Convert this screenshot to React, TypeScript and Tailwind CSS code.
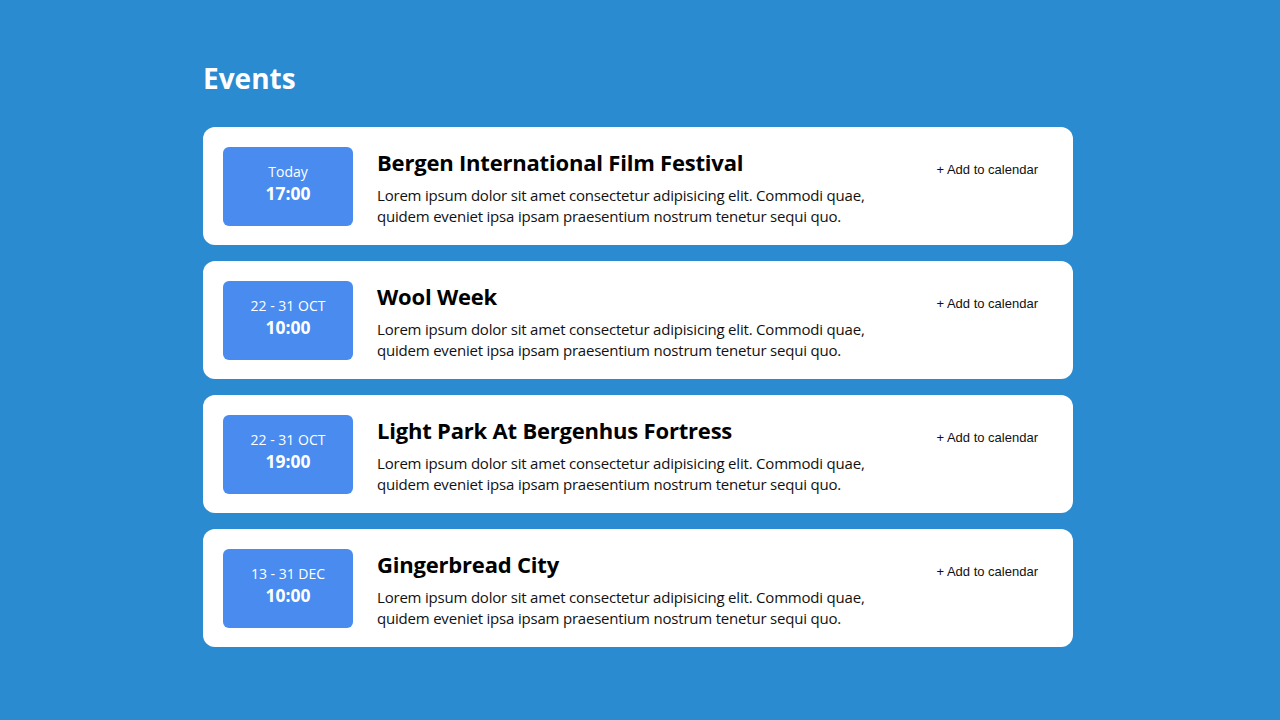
const events = [
  { date: "Today", time: "17:00", title: "Bergen International Film Festival" },
  { date: "22 - 31 OCT", time: "10:00", title: "Wool Week" },
  { date: "22 - 31 OCT", time: "19:00", title: "Light Park At Bergenhus Fortress" },
  { date: "13 - 31 DEC", time: "10:00", title: "Gingerbread City" },
];

const desc =
  "Lorem ipsum dolor sit amet consectetur adipisicing elit. Commodi quae, quidem eveniet ipsa ipsam praesentium nostrum tenetur sequi quo.";

export default function App() {
  return (
    <div className="min-h-[720px] w-full bg-[#2a8bd0] font-['Open_Sans',sans-serif]">
      <div className="ml-[203px] w-[870px] pt-[58px]">
        <h1 className="text-[28px] font-bold leading-[40px] text-white">Events</h1>
        <div className="mt-[29px] flex flex-col gap-4">
          {events.map((e) => (
            <div key={e.title} className="flex h-[118px] items-start rounded-xl bg-white p-5">
              <div className="flex h-[79px] w-[130px] flex-none flex-col items-center justify-center rounded-md bg-[#4a8bf0] pb-[7px] text-white">
                <span className="text-[14px] leading-[20px]">{e.date}</span>
                <span className="text-[17.5px] font-bold leading-[22px]">{e.time}</span>
              </div>
              <div className="ml-6 w-[500px]">
                <h2 className="text-[22px] font-bold leading-[31px] tracking-[-0.2px] text-black">{e.title}</h2>
                <p className="mt-[7px] text-[15px] leading-[21px] tracking-[-0.2px] text-[#111]">{desc}</p>
              </div>
              <button className="ml-auto mr-[15px] mt-[13px] font-['Liberation_Sans',Arial,sans-serif] text-[13px] text-[#111]">
                + Add to calendar
              </button>
            </div>
          ))}
        </div>
      </div>
    </div>
  );
}
